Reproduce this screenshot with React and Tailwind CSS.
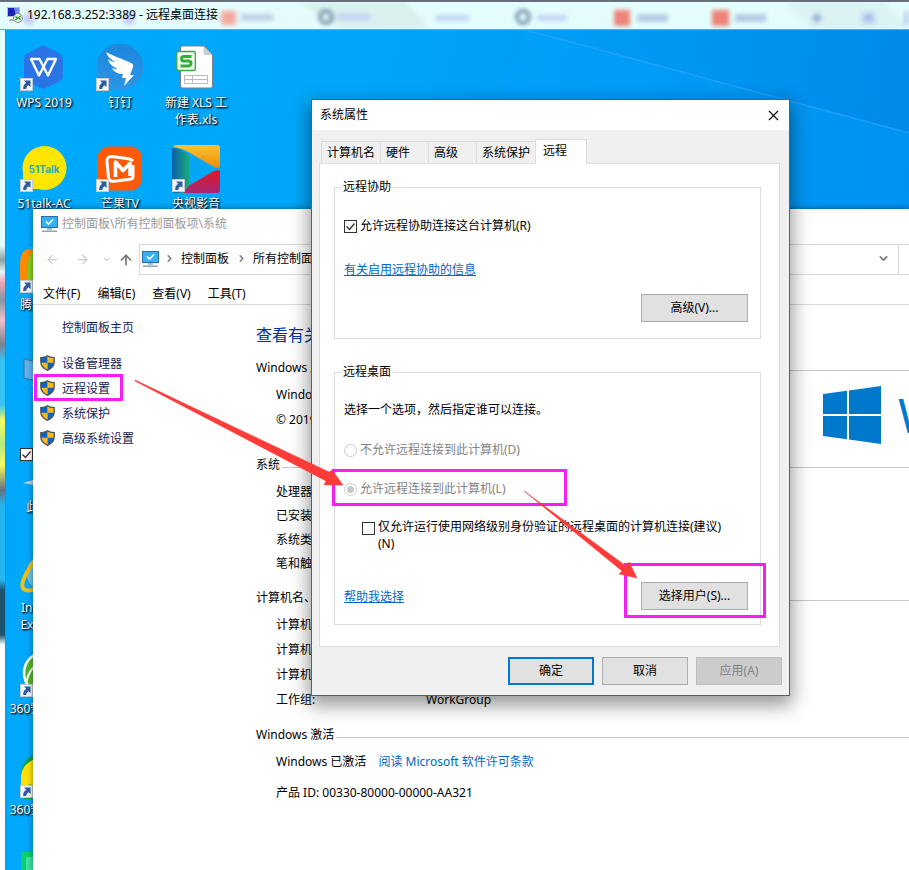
import React from 'react'
import { ArrowLeft, ArrowRight, ArrowUp, ChevronDown, ChevronRight, X } from 'lucide-react'

const Shortcut = () => (
  <svg className="absolute bottom-[1px] left-0 size-[13px]" viewBox="0 0 13 13">
    <rect x="0.5" y="0.5" width="12" height="12" fill="#f4f7fb" stroke="#c3ccd6" />
    <path d="M4 2.5h6.5V9L8.6 7.2C7 8.200 6.300 9.300 6.300 11H3.200C3 8.300 4 6 6.200 4.700z" fill="#2c5d9e" />
  </svg>
)

const WpsIcon = () => (
  <svg viewBox="0 0 48 48" className="size-12">
    <path d="M21 2.200q2.500-1.400 5 0l14 7.900q2.800 1.600 2.800 4.500v18q0 2.800-2.600 4.300L26 44q-2.500 1.400-5 0L6.600 36.900Q4 35.400 4 32.500v-18q0-2.900 2.600-4.400z" fill="#2a74e6" />
    <path d="M11 15h8.500l8.500 16.500L36 15H27.500l-8.500 16.500z" fill="none" stroke="#fff" strokeWidth="2.400" strokeLinejoin="round" />
  </svg>
)

const DingIcon = () => (
  <svg viewBox="0 0 48 48" className="size-12">
    <defs>
      <linearGradient id="ding" x1="0" y1="0" x2="0" y2="1">
        <stop offset="0" stopColor="#1d86dd" />
        <stop offset="1" stopColor="#2b96e8" />
      </linearGradient>
    </defs>
    <circle cx="24" cy="23" r="23.500" fill="url(#ding)" />
    <path d="M10 8c7 4 17 7 25 11 2 1 2.600 2 2 4l-3 8h4L28 42l2-8h-4l1-4c-5 0-9-2-11-6 2 1 4 1 6 1-5-2-9-5-10-10 2 2 5 3 7 3-5-3-8-6-9-10z" fill="#fff" />
  </svg>
)

const XlsIcon = () => (
  <svg viewBox="0 0 48 48" className="size-12">
    <path d="M10 2h22l8.500 9v31q0 2-2 2h-28q-2 0-2-2V4q0-2 1.500-2z" fill="#fff" stroke="#777f87" />
    <path d="M31.500 2l9 9.500z M31.500 2v7.500q0 1.500 1.500 1.500h7.500z" fill="#c9ced3" />
    <path d="M12.500 31.500h23v8h-23zM12.500 35.500h23M20.500 31.500v8" fill="none" stroke="#b9bdc2" />
    <rect x="4.800" y="7.500" width="18.500" height="19" rx="2" fill="#f3fff1" stroke="#35ac3d" strokeWidth="1.300" />
    <path d="M19.500 12.500H12q-2.500 0-2.500 2.300T12 17h4.500q2.500 0 2.500 2.300T16.500 22H8.500" fill="none" stroke="#35ac3d" strokeWidth="3" />
  </svg>
)

const TalkIcon = () => (
  <svg viewBox="0 0 48 48" className="size-12">
    <circle cx="24.500" cy="23" r="22" fill="#ffe600" />
    <path d="M3 23v21h22z" fill="#ffe600" />
    <text x="24" y="28" textAnchor="middle" fontSize="10" fontWeight="700" fontFamily="Inter, sans-serif" fill="#25a9c9">51Talk</text>
  </svg>
)

const MangoIcon = () => (
  <svg viewBox="0 0 48 48" className="size-12">
    <rect x="1.500" y="1.500" width="44.500" height="44" rx="12" fill="#ff5a08" />
    <path d="M37 20v11q0 3-3 3.300l-16 2q-5 .5-5.500-4L11 17q-.5-5.500 4.500-5.500L31 13.500q4 .5 6 2.500" fill="none" stroke="#fff" strokeWidth="3" />
    <path d="M19.500 32V17l7.500 8.500 7-7V31" fill="none" stroke="#fff" strokeWidth="3.600" strokeLinejoin="round" />
  </svg>
)

const CctvIcon = () => (
  <svg viewBox="0 0 48 48" className="size-12">
    <defs>
      <linearGradient id="cctvBlue" x1="0" y1="0" x2="1" y2="0">
        <stop offset="0" stopColor="#0b5fae" />
        <stop offset="1" stopColor="#19a978" />
      </linearGradient>
      <linearGradient id="cctvRed" x1="0" y1="0" x2="0" y2="1">
        <stop offset="0" stopColor="#e5161f" />
        <stop offset="1" stopColor="#a42878" />
      </linearGradient>
      <linearGradient id="cctvGold" x1="0" y1="0" x2="0" y2="1">
        <stop offset="0" stopColor="#fcc52e" />
        <stop offset="1" stopColor="#ee8b09" />
      </linearGradient>
    </defs>
    <path d="M0 3q8-1 17 8v28l-6 9H3q-3 0-3-3z" fill="url(#cctvBlue)" />
    <path d="M17 11l22 13-22 15z" fill="#02a6f4" />
    <path d="M17 35v4l-9 9h6l4-8z" fill="#19a978" />
    <path d="M1 2q1-2 4-2h40q3 0 3 3v17q0 5-6 2L18 8Q10 3 1 2z" fill="url(#cctvGold)" />
    <path d="M48 27v18q0 3-3 3H12q2-5 6-8l24-14q6-2 6 1z" fill="url(#cctvRed)" />
  </svg>
)

const TencentIcon = () => (
  <svg viewBox="0 0 48 48" className="size-12">
    <circle cx="20" cy="5" r="10" fill="#37b7f5" />
    <path d="M8 3C2 4 0 11 0 20v17h14V5q-3-2-6-2z" fill="#ff8a00" />
    <path d="M14 5C9 8 8 14 8 22v15h20V8z" fill="#7ed321" />
  </svg>
)

const NetworkIcon = () => (
  <svg viewBox="0 0 48 48" className="size-12">
    <path d="M4 12l22 5v19L4 31z" fill="#5fb2f0" stroke="#4a6d86" />
    <path d="M10 38l14-2v4z" fill="#d0d4d8" />
  </svg>
)

const ComputerIcon = () => (
  <svg viewBox="0 0 48 48" className="size-12">
    <path d="M3 35l16-5v8z" fill="#c5cbd0" />
    <rect x="18" y="10" width="26" height="20" fill="#5fb2f0" />
  </svg>
)

const IeIcon = () => (
  <svg viewBox="0 0 48 48" className="size-12">
    <circle cx="25" cy="24" r="19" fill="#6cc5f0" stroke="#2b8dc4" />
    <path d="M20 8C9 16 0 34 3 39s15 2 24-6" fill="none" stroke="#f2c010" strokeWidth="4" />
  </svg>
)

const BrowserIcon = () => (
  <svg viewBox="0 0 48 48" className="size-12">
    <circle cx="25" cy="23" r="21" fill="#55b52c" stroke="#fff" strokeWidth="2.500" />
    <path d="M6 34C8 22 14 14 24 12" fill="none" stroke="#fff" strokeWidth="2" />
  </svg>
)

const GuardIcon = () => (
  <svg viewBox="0 0 48 48" className="size-12">
    <circle cx="24" cy="24" r="23" fill="#0da045" />
    <path d="M1 27C1 15 10 7 24 7v35H3C1 38 1 32 1 27z" fill="#ffe20a" />
    <path d="M4 37q4-6 12-2v13H4z" fill="#0da045" />
  </svg>
)

const GreenIcon = () => (
  <svg viewBox="0 0 48 48" className="size-12">
    <rect x="1" y="0" width="46" height="46" fill="#0cd070" />
    <rect x="6" y="5" width="36" height="36" fill="#3be3a0" />
  </svg>
)

const desktopIcons = [
  { name: 'WPS 2019', icon: WpsIcon, shortcut: true, cell: 'col-start-1 row-start-1' },
  { name: '钉钉', icon: DingIcon, shortcut: true, cell: 'col-start-2 row-start-1' },
  { name: '新建 XLS 工作表.xls', icon: XlsIcon, cell: 'col-start-3 row-start-1' },
  { name: '51talk-AC', icon: TalkIcon, shortcut: true, cell: 'col-start-1 row-start-2' },
  { name: '芒果TV', icon: MangoIcon, shortcut: true, cell: 'col-start-2 row-start-2' },
  { name: '央视影音', icon: CctvIcon, shortcut: true, cell: 'col-start-3 row-start-2' },
  { name: '腾讯视频', icon: TencentIcon, shortcut: true, cell: 'col-start-1 row-start-3' },
  { name: '网络', icon: NetworkIcon, cell: 'col-start-1 row-start-4' },
  { name: '此电脑', icon: ComputerIcon, selected: true, cell: 'col-start-1 row-start-5' },
  { name: 'Internet Explorer', icon: IeIcon, cell: 'col-start-1 row-start-6' },
  { name: '360安全浏览', icon: BrowserIcon, shortcut: true, cell: 'col-start-1 row-start-7' },
  { name: '360安全卫士', icon: GuardIcon, shortcut: true, cell: 'col-start-1 row-start-8' },
  { name: '', icon: GreenIcon, cell: 'col-start-1 row-start-9' },
]

const CheckBox = ({ className = '', ...props }) => (
  <span className={'relative block size-[13px] shrink-0 ' + className}>
    <input type="checkbox" className="peer block size-[13px] appearance-none border border-[#333] bg-white" {...props} />
    <svg className="pointer-events-none absolute inset-0 hidden size-[13px] peer-checked:block" viewBox="0 0 13 13">
      <path d="M2.500 6.500l3 3 5-6" fill="none" stroke="#333" strokeWidth="1.300" />
    </svg>
  </span>
)

const DesktopIcon = ({ item }) => {
  const Icon = item.icon
  return (
    <div className={'flex flex-col items-center ' + item.cell}>
      <div className="relative">
        <Icon />
        {item.shortcut && <Shortcut />}
        {item.selected && (
          <div className="absolute top-0 left-0">
            <CheckBox defaultChecked aria-label={item.name} />
          </div>
        )}
      </div>
      <span className="mt-[2px] w-[72px] text-center leading-[17px] text-white [text-shadow:1px_1px_2px_#000,1px_1px_2px_#000a]">
        {item.name}
      </span>
    </div>
  )
}

// browser tabs showing through the glass title bar
const GlassTabs = () => (
  <svg className="absolute top-0 left-0 h-[27px] w-[909px] blur-[2px]" viewBox="0 0 909 27">
    <path d="M300 0h105l25 27H340z" fill="#d3ebe8" opacity=".7" />
    <path d="M785 0h100l24 27H810z" fill="#d6edec" opacity=".6" />
    <circle cx="29" cy="17" r="6" fill="#c5cdf8" />
    <circle cx="129" cy="17" r="6" fill="#c5cdf8" />
    <rect x="221" y="9" width="15" height="14" fill="#f5a9a0" />
    <rect x="241" y="12" width="32" height="7" fill="#bfd2e6" />
    <circle cx="326" cy="15" r="6" fill="none" stroke="#7f99b0" strokeWidth="4" />
    <rect x="337" y="12" width="34" height="6" fill="#c3d3f3" />
    <rect x="436" y="13" width="33" height="6" fill="#c3d3f3" />
    <circle cx="523" cy="15" r="6" fill="none" stroke="#7f99b0" strokeWidth="4" />
    <rect x="537" y="13" width="30" height="6" fill="#c3d3f3" />
    <rect x="614" y="8" width="16" height="16" fill="#ee8378" />
    <rect x="637" y="12" width="31" height="8" fill="#b3cbe3" />
    <rect x="712" y="8" width="17" height="16" fill="#ee8378" />
    <rect x="735" y="12" width="31" height="8" fill="#b3cbe3" />
    <path d="M812 16h10M817 11v10" stroke="#8ca6cf" strokeWidth="3" />
    <rect x="861" y="9" width="15" height="14" fill="#c6dcf3" />
    <rect x="865" y="13" width="7" height="6" fill="#a3bbe6" />
    <rect x="904" y="9" width="14" height="14" fill="#bdd2ef" />
  </svg>
)

const MonitorIcon = () => (
  <svg className="h-4 w-[17px] shrink-0" viewBox="0 0 17 16">
    <rect x="0.500" y="0.500" width="16" height="11" fill="#35b2f5" stroke="#2f6f9e" />
    <path d="M5 5.500l2.500 2.500L12 3.500" fill="none" stroke="#fff" strokeWidth="1.700" />
    <path d="M6 13h5M1 15.200h15" stroke="#8fa5b5" strokeWidth="1.400" />
  </svg>
)

const Shield = () => (
  <svg className="mb-[2px] h-4 w-[15px] shrink-0" viewBox="0 0 15 16">
    <path d="M7.500 1C6 2.200 3.500 2.800 1 2.800V7c0 4 3 6.500 6.500 8.200z" fill="#f9b820" />
    <path d="M7.500 1C9 2.200 11.500 2.800 14 2.800V7c0 4-3 6.500-6.500 8.200z" fill="#0b63c4" />
    <path d="M7.500 1C6 2.200 3.500 2.800 1 2.800V7.800h6.500z" fill="#0b63c4" />
    <path d="M7.500 1C9 2.200 11.500 2.800 14 2.800V7.800H7.500z" fill="#f9b820" />
    <path d="M7.500 .8C6 2 3.500 2.700 .8 2.700V7c0 4.200 3 6.700 6.700 8.400 3.700-1.700 6.700-4.200 6.700-8.400V2.700C11.500 2.700 9 2 7.500 .8z" fill="none" stroke="#4d5358" strokeWidth="1.300" />
  </svg>
)

const sideLinks = ['设备管理器', '远程设置', '系统保护', '高级系统设置']

const Section = ({ title, children, className = '' }) => (
  <section className={className}>
    <div className="flex h-4 items-center gap-[2px]">
      <h2>{title}</h2>
      <div className="mt-1 h-px flex-1 bg-[#c8c8c8]"></div>
    </div>
    {children}
  </section>
)

const Rows = ({ rows, className }) => (
  <dl className={'pl-5 ' + className}>
    {rows.map(([label, value]) => (
      <div key={label} className="flex items-center">
        <dt className="w-[150px]">{label}</dt>
        <dd>{value}</dd>
      </div>
    ))}
  </dl>
)

const SystemWindow = () => (
  <div className="absolute top-[209px] right-0 bottom-0 left-[33px] flex flex-col overflow-hidden bg-white shadow-[0_0_6px_rgba(0,0,0,0.45)]">
    <div className="flex h-[30px] shrink-0 items-center gap-1 pl-2 text-[#999]">
      <MonitorIcon />
      <span>控制面板\所有控制面板项\系统</span>
    </div>
    <div className="mt-[5px] flex h-[31px] shrink-0 pl-1">
      <button aria-label="后退" className="grid w-[30px] place-items-center text-[#ccc]"><ArrowLeft size={15} /></button>
      <button aria-label="前进" className="grid w-[30px] place-items-center text-[#ccc]"><ArrowRight size={15} /></button>
      <button aria-label="最近" className="grid w-[18px] place-items-center text-[#ccc]"><ChevronDown size={9} strokeWidth={3} /></button>
      <button aria-label="上移" className="grid w-[22px] place-items-center text-[#777]"><ArrowUp size={16} strokeWidth={2.5} /></button>
      <div className="ml-[2px] flex flex-1 items-center border border-[#d9d9d9] pr-2 pb-[2px] pl-[2px]">
        <MonitorIcon />
        <ChevronRight size={11} strokeWidth={3} className="mr-[6px] ml-[5px] text-[#777]" />
        <span>控制面板</span>
        <ChevronRight size={11} strokeWidth={3} className="mr-[6px] ml-[7px] text-[#777]" />
        <span>所有控制面板项</span>
        <ChevronDown size={13} strokeWidth={3} className="ml-auto text-[#777]" />
      </div>
      <input aria-label="搜索" className="w-[10px] border-y border-[#d9d9d9]" />
    </div>
    <nav className="flex h-[30px] shrink-0 items-center gap-[17px] border-b border-[#d9d9d9] pt-2 pl-[10px]">
      <button>文件(F)</button>
      <button>编辑(E)</button>
      <button>查看(V)</button>
      <button>工具(T)</button>
    </nav>
    <div className="flex">
      <aside className="w-[223px] shrink-0 pt-[15px] text-[#151c55]">
        <a href="#" className="ml-[29px] block h-4">控制面板主页</a>
        <ul className="mt-[15px] pl-[7px]">
          {sideLinks.map((link) => (
            <li key={link} className="relative h-[25px]">
              <a href="#" className="flex h-full items-center gap-[7px]">
                <Shield />
                {link}
              </a>
              {link === '远程设置' && (
                <div className="absolute -top-[2px] -left-[6px] h-[27px] w-[89px] border-3 border-[#f81df5]"></div>
              )}
            </li>
          ))}
        </ul>
      </aside>
      <main className="min-w-0 flex-1">
        <h1 className="mt-[18px] mb-[13px] text-base leading-6 text-[#003399]">查看有关计算机的基本信息</h1>
        <Section title="Windows 版本">
          <div className="flex justify-between">
            <div className="pt-[6px] pl-5 leading-[25px]">
              <p>Windows 10 专业版</p>
              <p>© 2019 Microsoft Corporation。保留所有权利。</p>
            </div>
            <div className="flex w-[86px] shrink-0 items-center gap-[17px] overflow-hidden pt-[10px] pb-[13px] text-[#0078cc]">
              <svg className="size-[58px] shrink-0" viewBox="0 0 58 58">
                <path d="M0 8l24-3.200V28H0zM26 4.500L58 0v28H26zM0 30h24v23.300L0 50zM26 30h32v28l-32-4.500z" fill="currentColor" />
              </svg>
              <span className="text-5xl whitespace-nowrap">Windows 10</span>
            </div>
          </div>
        </Section>
        <Section title="系统">
          <Rows
            className="pt-[7px] leading-6"
            rows={[['处理器:', ''], ['已安装的内存(RAM):', ''], ['系统类型:', ''], ['笔和触控:', '']]}
          />
        </Section>
        <Section title="计算机名、域和工作组" className="mt-[14px]">
          <Rows
            className="pt-[6px] leading-[25px]"
            rows={[['计算机名:', ''], ['计算机全名:', ''], ['计算机描述:', ''], ['工作组:', 'WorkGroup']]}
          />
        </Section>
        <Section title="Windows 激活" className="mt-[15px]">
          <div className="pt-[3px] pl-5 leading-[31px]">
            <p>
              Windows 已激活
              <a href="#" className="ml-3 text-[#0066cc]">阅读 Microsoft 软件许可条款</a>
            </p>
            <p>产品 ID: 00330-80000-00000-AA321</p>
          </div>
        </Section>
      </main>
    </div>
  </div>
)

const tabs = [
  { name: '计算机名', width: 'w-[59px]' },
  { name: '硬件', width: 'w-12' },
  { name: '高级', width: 'w-12' },
  { name: '系统保护', width: 'w-[59px]' },
]

const radioClass =
  'grid size-[13px] shrink-0 appearance-none place-items-center rounded-full border border-[#ccc] bg-white checked:before:size-[7px] checked:before:rounded-full checked:before:bg-[#c8c8c8]'
const groupClass = 'border border-[#dcdcdc] pr-3 pl-[9px]'
const buttonClass = 'h-7 border border-[#adadad] bg-[#e1e1e1]'

const PropertiesDialog = () => (
  <div
    role="dialog"
    aria-label="系统属性"
    className="absolute top-[99px] left-[311px] w-[479px] border border-[#5a5f63] bg-[#f0f0f0] shadow-[0_7px_18px_2px_rgba(0,0,0,0.42)]"
  >
    <div className="flex h-[30px] items-center justify-between bg-white pr-[7px] pl-2">
      <span>系统属性</span>
      <button aria-label="关闭"><X size={17} strokeWidth={1.5} /></button>
    </div>
    <div className="px-[7px] pt-[9px]">
      <div className="flex items-end pl-[2px]">
        {tabs.map((tab) => (
          <button key={tab.name} className={'h-[22px] border-t border-l border-[#dcdcdc] pl-[5px] text-left whitespace-nowrap ' + tab.width}>
            {tab.name}
          </button>
        ))}
        <button className="relative -mb-px h-[25px] w-[52px] border border-b-0 border-[#dcdcdc] bg-white pb-[2px] pl-[7px] text-left">
          远程
        </button>
      </div>
      <div className="mr-[2px] border border-[#dcdcdc] bg-white pt-[15px] pr-[18px] pb-[21px] pl-[14px]">
        <fieldset className={groupClass + ' pb-4'}>
          <legend className="-ml-[3px] px-[2px]">远程协助</legend>
          <label className="mt-[23px] flex items-center gap-[3px]">
            <CheckBox defaultChecked />
            允许远程协助连接这台计算机(R)
          </label>
          <a href="#" className="mt-7 block w-fit text-[#0066cc] underline">有关启用远程协助的信息</a>
          <div className="mt-4 flex justify-end">
            <button className={buttonClass + ' w-[107px]'}>高级(V)...</button>
          </div>
        </fieldset>
        <fieldset className={groupClass + ' mt-[25px] pb-[14px]'}>
          <legend className="-ml-[3px] px-[2px]">远程桌面</legend>
          <p className="mt-[22px]">选择一个选项，然后指定谁可以连接。</p>
          <label className="mt-6 flex items-center gap-[3px] text-[#838383]">
            <input type="radio" name="remote" disabled className={radioClass} />
            不允许远程连接到此计算机(D)
          </label>
          <div className="relative mt-[23px]">
            <label className="flex items-center gap-[3px] text-[#838383]">
              <input type="radio" name="remote" disabled defaultChecked className={radioClass} />
              允许远程连接到此计算机(L)
            </label>
            <div className="absolute -top-3 -left-3 h-[37px] w-[235px] border-3 border-[#f81df5]"></div>
          </div>
          <label className="mt-[21px] ml-[18px] flex gap-[3px] leading-[17px]">
            <CheckBox className="mt-1" />
            <span className="w-[350px]">仅允许运行使用网络级别身份验证的远程桌面的计算机连接(建议)(N)</span>
          </label>
          <div className="mt-[30px] flex items-center justify-between">
            <a href="#" className="pt-[2px] text-[#0066cc] underline">帮助我选择</a>
            <div className="relative">
              <button className={buttonClass + ' w-[107px]'}>选择用户(S)...</button>
              <div className="pointer-events-none absolute -top-[19px] -left-[17px] h-[55px] w-[142px] border-3 border-[#f81df5]"></div>
            </div>
          </div>
        </fieldset>
      </div>
      <div className="flex justify-end gap-2 py-[10px]">
        <button className="h-7 w-[86px] border-2 border-[#0078d7] bg-[#e1e1e1]">确定</button>
        <button className={buttonClass + ' w-[86px]'}>取消</button>
        <button disabled className="h-7 w-[86px] border border-[#bfbfbf] bg-[#ccc] text-[#838383]">应用(A)</button>
      </div>
    </div>
  </div>
)

const Arrows = () => (
  <svg className="pointer-events-none absolute top-0 left-0 h-[870px] w-[909px]" viewBox="0 0 909 870" fill="#fd3b39">
    <path d="M135 380L329 472L332 470L343 485L324 485L326 481L135 381z" stroke="#fd3b39" strokeWidth=".5" />
    <path d="M524 491L626 566L629 562L637 578L619 574L622 571z" stroke="#fd3b39" strokeWidth=".5" />
  </svg>
)

export default function App() {
  return (
    <div className="relative flex h-screen flex-col overflow-hidden bg-white font-['Noto_Sans','Noto_Sans_CJK_SC',sans-serif] text-xs text-black">
      <header className="relative flex h-[30px] shrink-0 items-center gap-1 overflow-hidden border-t-2 border-b border-t-[#66707a] border-b-[#8d9fa0] bg-[#e4fdfc] pb-[2px] pl-[7px]">
        <GlassTabs />
        <svg className="relative size-4" viewBox="0 0 16 16">
          <rect x="0.500" y="0.500" width="12" height="9" fill="#1722b8" stroke="#b9bfc8" />
          <path d="M7 1h5v8H9z" fill="#6c8cf0" />
          <path d="M3 12h7l1 2H2z" fill="#aab0b8" />
          <circle cx="11" cy="11" r="4.500" fill="#e6ebe4" stroke="#8b918c" />
          <path d="M8.500 9.500l2 1.700-2 1.700M13.500 9l-2 1.700 2 1.700" fill="none" stroke="#299a2d" strokeWidth="1.300" />
        </svg>
        <span className="relative">192.168.3.252:3389 - 远程桌面连接</span>
      </header>
      <div className="flex min-h-0 flex-1">
        <div className="w-[5px] shrink-0 bg-[linear-gradient(180deg,#e4fdfc_0px,#e4fdfc_215px,#8a9fa8_230px,#e8f8f8_242px,#f0a5b5_252px,#8595a5_270px,#f0c0cc_290px,#77828c_315px,#35c5f5_330px,#35c5f5_375px,#f5fb60_390px,#b5eb80_415px,#f5fb60_435px,#66707f_460px,#25b5f0_475px,#25b5f0_550px,#1d5570_560px,#1d5570_605px,#ffffff_615px)]"></div>
        <div className="relative flex-1 overflow-hidden border-l border-[#5b7f95] bg-[linear-gradient(100deg,#00a9fb_0%,#00a7fb_35%,#0096f2_65%,#0083e6_100%)]">
          <svg className="absolute top-0 left-0 h-[200px] w-[903px]" viewBox="0 0 903 200">
            <path d="M520 0L903 103V200H440z" fill="#00a2ff" opacity=".35" />
            <path d="M520 0L903 103" stroke="#35a9ff" strokeWidth="1.500" opacity=".6" />
          </svg>
          <div className="relative grid auto-rows-[101px] grid-cols-[repeat(3,76px)] pt-[14px]">
            {desktopIcons.map((item) => (
              <DesktopIcon key={item.cell} item={item} />
            ))}
          </div>
        </div>
      </div>
      <SystemWindow />
      <PropertiesDialog />
      <Arrows />
    </div>
  )
}
